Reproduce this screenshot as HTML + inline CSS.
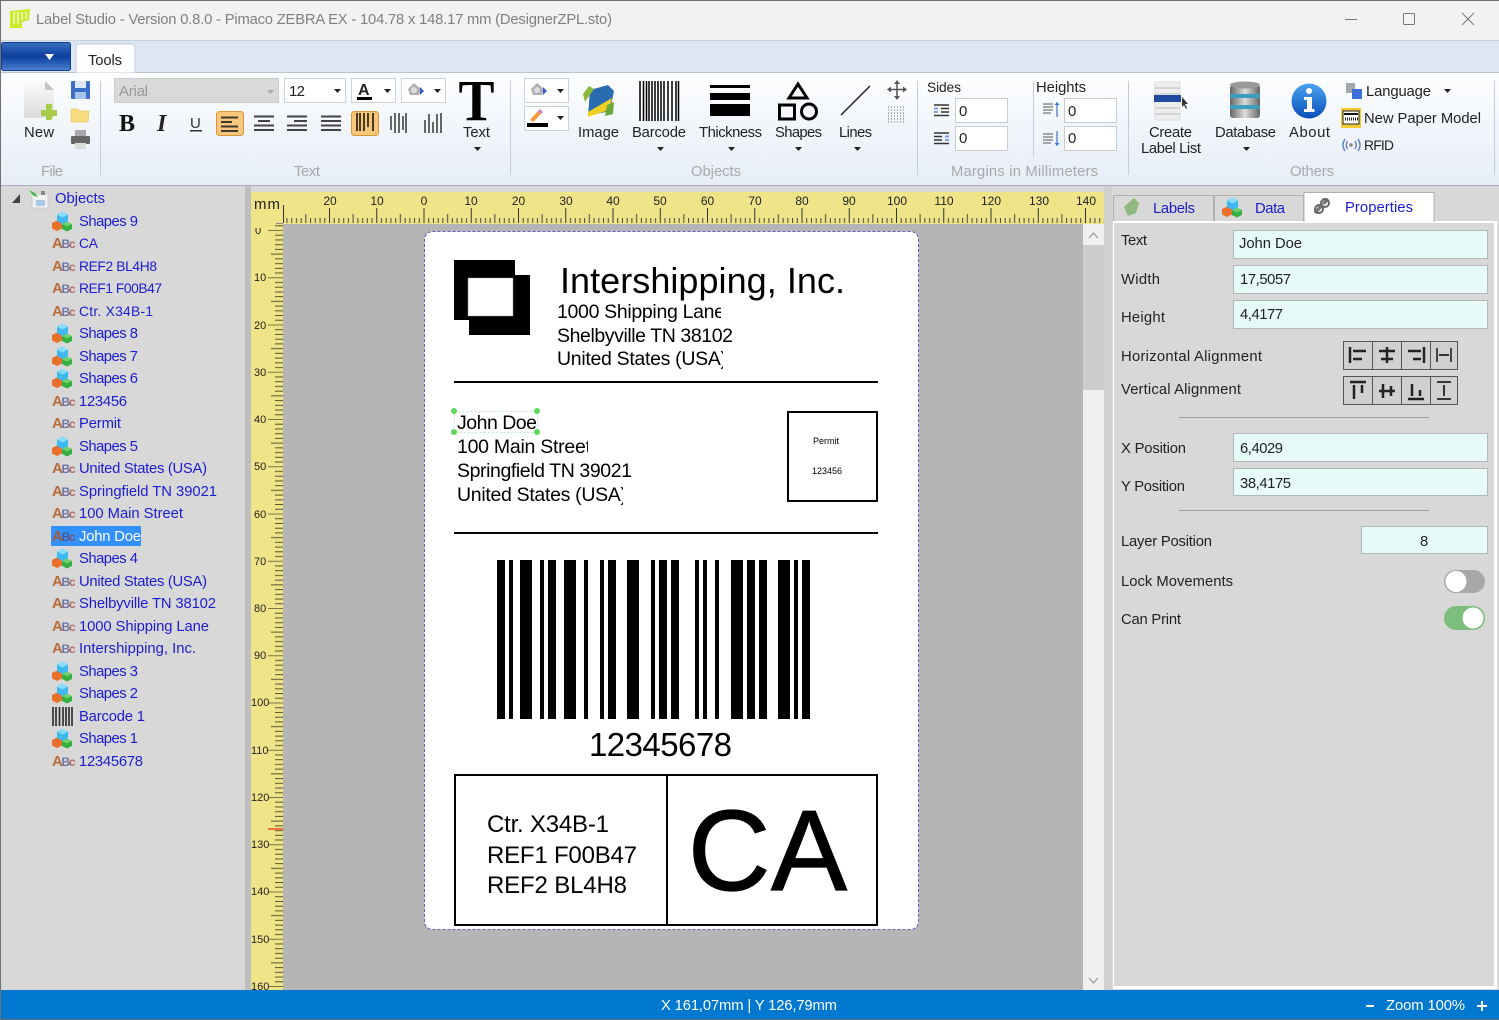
<!DOCTYPE html>
<html><head><meta charset="utf-8"><title>Label Studio</title>
<style>
html,body{margin:0;padding:0;background:#f2f2f2;overflow:hidden}
svg{display:block}
text{font-family:"Liberation Sans",sans-serif;font-size:14.8px;fill:#222;transform:translateY(-.8px)}
.tr text{fill:#1c1cd0}
.g{fill:#a9a9a9}
.L text{transform:none}
.lb{font-size:19.5px;fill:#000}
.rl,.rl text{font-size:12px;fill:#222;transform:none}
text.ic{font-size:15px;font-weight:bold;letter-spacing:-1.3px}
text.s{font-size:13.8px}
</style></head><body>
<svg xmlns="http://www.w3.org/2000/svg" width="1499" height="1020" viewBox="0 0 1499 1020">
<defs>
<linearGradient id="rib" x1="0" y1="0" x2="0" y2="1"><stop offset="0" stop-color="#fdfeff"/><stop offset="1" stop-color="#e6edf6"/></linearGradient>
<linearGradient id="app" x1="0" y1="0" x2="0" y2="1"><stop offset="0" stop-color="#3a6fc0"/><stop offset=".5" stop-color="#0c3f9e"/><stop offset="1" stop-color="#4a82d0"/></linearGradient>
<linearGradient id="doc" x1="0" y1="0" x2="0" y2="1"><stop offset="0" stop-color="#fafafa"/><stop offset="1" stop-color="#dcdcdc"/></linearGradient>
<linearGradient id="db" x1="0" y1="0" x2="1" y2="0"><stop offset="0" stop-color="#666"/><stop offset=".5" stop-color="#ddd"/><stop offset="1" stop-color="#666"/></linearGradient>
<linearGradient id="info" x1="0" y1="0" x2="0" y2="1"><stop offset="0" stop-color="#4aa3f0"/><stop offset="1" stop-color="#0a4fb8"/></linearGradient>
<pattern id="hr" patternUnits="userSpaceOnUse" x="423.5" y="208" width="47.25" height="15">
<rect x="0" y="0" width="1" height="15" fill="#333"/>
<g fill="#444"><rect x="4.7" y="10" width="1" height="5"/><rect x="9.45" y="10" width="1" height="5"/><rect x="14.2" y="10" width="1" height="5"/><rect x="18.9" y="10" width="1" height="5"/><rect x="23.6" y="6" width="1" height="9"/><rect x="28.35" y="10" width="1" height="5"/><rect x="33.1" y="10" width="1" height="5"/><rect x="37.8" y="10" width="1" height="5"/><rect x="42.5" y="10" width="1" height="5"/></g>
</pattern>
<pattern id="vr" patternUnits="userSpaceOnUse" x="268" y="230" width="15" height="47.25">
<rect x="0" y="0" width="15" height="1" fill="#77773f"/>
<g fill="#55552c"><rect x="7" y="4.7" width="8" height="1"/><rect x="7" y="9.45" width="8" height="1"/><rect x="7" y="14.2" width="8" height="1"/><rect x="7" y="18.9" width="8" height="1"/><rect x="3" y="23.6" width="12" height="1"/><rect x="7" y="28.35" width="8" height="1"/><rect x="7" y="33.1" width="8" height="1"/><rect x="7" y="37.8" width="8" height="1"/><rect x="7" y="42.5" width="8" height="1"/></g>
</pattern>
<g id="cubes">
<path d="M0 12l5-2.500 5 2.500v5.500l-5 2.500-5-2.500z" fill="#e8702a"/>
<path d="M10 13l5-2.500 5 2.500v5l-5 2.500-5-2.500z" fill="#36b040"/>
<path d="M10 13l5-2.500 5 2.500-5 2.500z" fill="#72d070"/>
<path d="M5 3.500l5.500-3 5.500 3v6.500l-5.500 3-5.500-3z" fill="#3db8f0"/>
<path d="M5 3.500l5.500-3 5.500 3-5.500 3z" fill="#8adcfb"/>
</g>
<clipPath id="c1"><rect x="550" y="300" width="171" height="25"/></clipPath>
<clipPath id="c2"><rect x="550" y="348" width="173" height="26"/></clipPath>
<clipPath id="c3"><rect x="450" y="436" width="138" height="24"/></clipPath>
<clipPath id="c4"><rect x="450" y="484" width="173" height="26"/></clipPath>
<clipPath id="c5"><rect x="251" y="228" width="32" height="763"/></clipPath>
</defs>

<!-- window -->
<rect width="1499" height="1020" fill="#f2f2f2"/>
<rect y="0" width="1499" height="1" fill="#707070"/>
<path d="M10 11l20-2-1 11-7 2v6l-12 0z" fill="#cbe92f"/>
<path d="M14 12v12M18 12v12M22 12v8M26 12v7" stroke="#f3f9c0" stroke-width="1.500"/>
<text x="36" y="25" textLength="576" style="fill:#808080">Label Studio - Version 0.8.0 - Pimaco ZEBRA EX - 104.78 x 148.17 mm (DesignerZPL.sto)</text>
<g fill="none" stroke="#777" stroke-width="1">
<path d="M1345 19.500h12"/><rect x="1403.500" y="13.500" width="11" height="11" rx="1"/><path d="M1462 13l12 12M1474 13l-12 12"/>
</g>
<rect y="40" width="1499" height="1" fill="#c8d0dc"/>
<rect y="41" width="1499" height="32" fill="#dce6f4"/>
<rect y="72" width="1499" height="1" fill="#b9c4d2"/>
<rect x="1.500" y="42.500" width="69" height="28" rx="2" fill="url(#app)" stroke="#123f90"/>
<path d="M45 54h9l-4.500 6z" fill="#fff"/>
<path d="M76 73V47a3 3 0 0 1 3-3h53a3 3 0 0 1 3 3v26z" fill="#fdfeff" stroke="#c3ccd8"/>
<text x="88" y="66" textLength="34">Tools</text>

<!-- ribbon -->
<rect y="73" width="1499" height="112" fill="url(#rib)"/>
<rect y="185" width="1499" height="1" fill="#a6aeb8"/>
<g fill="#c4ccd6">
<rect x="100" y="81" width="1" height="94"/><rect x="510" y="81" width="1" height="94"/><rect x="917" y="81" width="1" height="94"/><rect x="1033" y="81" width="1" height="76"/><rect x="1128" y="81" width="1" height="94"/><rect x="1494" y="81" width="1" height="94"/>
</g>
<text class="g" x="41" y="177" textLength="22">File</text>
<text class="g" x="294" y="177" textLength="26">Text</text>
<text class="g" x="691" y="177" textLength="50">Objects</text>
<text class="g" x="951" y="177" textLength="147">Margins in Millimeters</text>
<text class="g" x="1290" y="177" textLength="44">Others</text>

<!-- File -->
<path d="M24 81h21l9 9v28H24z" fill="url(#doc)"/><path d="M45 81l9 9h-9z" fill="#c4c4c4"/>
<path d="M46 104h6v6h5v6h-5v4h-6v-4h-5v-6h5z" fill="#a8cc4a"/>
<text x="24" y="138" textLength="30">New</text>
<rect x="71" y="81" width="19" height="18" rx="1" fill="#3d70c8"/><rect x="75" y="81" width="11" height="7" fill="#dce8f8"/><rect x="75" y="92" width="11" height="7" fill="#a8c4ec"/>
<path d="M71 109h7l2 2h9l-1 11H71z" fill="#f7dc80" stroke="#dcb94c" stroke-width=".5"/>
<rect x="75" y="130" width="11" height="6" fill="#aaa"/><rect x="71" y="136" width="19" height="8" rx="1" fill="#666"/><rect x="75" y="143" width="11" height="6" fill="#ddd"/>

<!-- Text group -->
<rect x="114.500" y="78.500" width="164" height="24" fill="#d9d9d9" stroke="#cbcbcb"/>
<text x="119" y="97" textLength="29" style="fill:#999;font-size:15px">Arial</text>
<path d="M267 90h7l-3.500 4z" fill="#aaa"/>
<rect x="284.500" y="78.500" width="61" height="24" fill="#fff" stroke="#ccd2da"/>
<text x="289" y="97" textLength="16" style="font-size:15px">12</text><path d="M334 89h7l-3.500 4z" fill="#222"/>
<rect x="351.500" y="78.500" width="44" height="24" fill="#fff" stroke="#ccd2da"/>
<text x="358" y="96" style="font-size:16px;font-weight:bold">A</text><rect x="357" y="97" width="15" height="3" fill="#000"/><path d="M384 89h7l-3.500 4z" fill="#222"/>
<rect x="401.500" y="78.500" width="44" height="24" fill="#fff" stroke="#ccd2da"/>
<path d="M408 89l6-6 7 6-2 6h-9z" fill="#b0b0b0"/><circle cx="414" cy="90" r="3" fill="#ddd"/><path d="M420 87l4 4-4 4z" fill="#3a5ad0"/><path d="M434 89h7l-3.500 4z" fill="#222"/>

<text x="119" y="132" style="font-family:'Liberation Serif',serif;font-size:24px;font-weight:bold;fill:#111">B</text>
<text x="157" y="132" style="font-family:'Liberation Serif',serif;font-size:24px;font-weight:bold;font-style:italic;fill:#222">I</text>
<text x="190" y="129" style="font-size:15px;fill:#333">U</text><rect x="190" y="130" width="12" height="1.500" fill="#333"/>
<rect x="216.500" y="111.500" width="27" height="24" rx="3" fill="#f9c77c" stroke="#d9963a"/>
<path d="M221 117.500h17M221 122h11M221 126.500h17M221 131h17" stroke="#3f3a30" stroke-width="2"/>
<path d="M254 116.500h20M258 121h12M254 125.500h20M254 130h20" stroke="#444" stroke-width="2"/>
<path d="M287 116.500h20M294 121h13M287 125.500h20M287 130h20" stroke="#444" stroke-width="2"/>
<path d="M321 116.500h20M321 121h20M321 125.500h20M321 130h20" stroke="#444" stroke-width="2"/>
<rect x="351.500" y="111.500" width="27" height="24" rx="3" fill="#f9c77c" stroke="#d9963a"/>
<path d="M357 113v18M360 113v18M364 113v18M368 113v14M373 113v18" stroke="#4a3a20" stroke-width="2"/>
<path d="M391 116v14M395 113v20M399 113v20M403 116v14M406 113v20" stroke="#555" stroke-width="1.800"/>
<path d="M425 120v13M429 114v19M433 122v11M437 114v19M441 113v20" stroke="#555" stroke-width="1.800"/>
<g class="L"><text x="458.500" y="120" textLength="36" lengthAdjust="spacingAndGlyphs" style="font-family:'Liberation Serif',serif;font-size:58px;font-weight:bold;fill:#000">T</text></g>
<text x="463" y="138" textLength="27">Text</text><path d="M474 147h7l-3.500 4z" fill="#222"/>

<!-- Objects -->
<rect x="524.500" y="78.500" width="44" height="24" fill="#fff" stroke="#ccd2da"/>
<path d="M531 89l6-6 7 6-2 6h-9z" fill="#b0b0b0"/><circle cx="537" cy="90" r="3" fill="#ddd"/><path d="M543 87l4 4-4 4z" fill="#3a5ad0"/><path d="M557 89h7l-3.500 4z" fill="#222"/>
<rect x="524.500" y="106.500" width="44" height="24" fill="#fff" stroke="#ccd2da"/>
<path d="M530 120l8-9 3 3-8 8z" fill="#f09a3c"/><path d="M538 111l2-2 3 3-2 2z" fill="#c080d0"/><rect x="527" y="123" width="21" height="4" fill="#000"/><path d="M557 116h7l-3.500 4z" fill="#222"/>
<path d="M584 88l30-5 1 30-28 6z" fill="#fdfdfd"/>
<path d="M590 90l18-5 6 6-4 20-22 5z" fill="#2a6cb0"/><path d="M588 112l24-14-3 12-21 7z" fill="#f0d020"/><path d="M583 94l6-8 5 3-9 13z" fill="#8ab83c"/><path d="M607 105l7-3-1 12-8 2z" fill="#6aa83c"/>
<text x="578" y="138" textLength="41">Image</text>
<path d="M640 81v40M643.500 81v40M646.500 81v40M649 81v40M652 81v40M655 81v40M658 81v40M661 81v40M664 81v40M668 81v40M672 81v40M676 81v40M678.500 81v40" stroke="#000" stroke-width="1.500"/>
<text x="632" y="138" textLength="54">Barcode</text><path d="M657 147h7l-3.500 4z" fill="#222"/>
<rect x="710" y="85" width="40" height="3" fill="#000"/><rect x="710" y="93" width="40" height="7" fill="#000"/><rect x="710" y="104" width="40" height="12" fill="#000"/>
<text x="699" y="138" textLength="63">Thickness</text><path d="M728 147h7l-3.500 4z" fill="#222"/>
<path d="M798 84l9 14h-18z" fill="none" stroke="#000" stroke-width="3"/><rect x="779.500" y="105" width="15" height="14" fill="none" stroke="#000" stroke-width="3"/><circle cx="809" cy="111.500" r="7.500" fill="none" stroke="#000" stroke-width="3"/>
<text x="775" y="138" textLength="47">Shapes</text><path d="M795 147h7l-3.500 4z" fill="#222"/>
<path d="M841 115l29-29" stroke="#222" stroke-width="1.500"/>
<text x="839" y="138" textLength="33">Lines</text><path d="M854 147h7l-3.500 4z" fill="#222"/>
<path d="M897 81v18M888 89.500h18" stroke="#555" stroke-width="1.500"/><path d="M897 80l-3 4h6zM897 100l-3-4h6zM887 89.500l4-3v6zM907 89.500l-4-3v6z" fill="#555"/>
<path d="M888 107h16M888 110h16M888 113h16M888 116h16M888 119h16M888 122h16" stroke="#666" stroke-width="1" stroke-dasharray="1 2"/>

<!-- Margins -->
<text class="s" x="927" y="93" textLength="34">Sides</text>
<text x="1036" y="93" textLength="50">Heights</text>
<g fill="#fff" stroke="#c6ccd4">
<rect x="955.500" y="98.500" width="52" height="24"/><rect x="955.500" y="126.500" width="52" height="24"/><rect x="1064.500" y="98.500" width="52" height="24"/><rect x="1064.500" y="126.500" width="52" height="24"/>
</g>
<text x="959" y="117" style="font-size:15px">0</text><text x="959" y="144" style="font-size:15px">0</text><text x="1068" y="117" style="font-size:15px">0</text><text x="1068" y="144" style="font-size:15px">0</text>
<path d="M934 105h15M941 108.500h8M941 112h8M934 115.500h15" stroke="#333" stroke-width="1.500"/><path d="M934 108.500h4M934 112h4" stroke="#7aa0e8" stroke-width="2"/>
<path d="M934 133h15M934 136.500h8M934 140h8M934 143.500h15" stroke="#333" stroke-width="1.500"/><path d="M945 136.500h4M945 140h4" stroke="#7aa0e8" stroke-width="2"/>
<path d="M1043 104h10M1043 107h10M1043 110h10M1043 113h8" stroke="#555" stroke-width="1"/><path d="M1057 104v13" stroke="#3a70c8" stroke-width="1.200"/><path d="M1057 102l-2.500 3h5z" fill="#3a70c8"/>
<path d="M1043 134h10M1043 137h10M1043 140h10M1043 143h8" stroke="#555" stroke-width="1"/><path d="M1057 131v13" stroke="#3a70c8" stroke-width="1.200"/><path d="M1057 146l-2.500-3h5z" fill="#3a70c8"/>

<!-- Others -->
<rect x="1155" y="82" width="25" height="38" fill="#eee" stroke="#ddd"/>
<path d="M1155 88h25M1155 94h25M1155 108h25M1155 114h25" stroke="#bbb"/>
<rect x="1154" y="95" width="27" height="7" fill="#1f4aa0"/>
<path d="M1182 97l0 10 2-2 2 4 1-1-2-4 3 0z" fill="#333"/>
<text x="1149" y="138" textLength="43">Create</text><text x="1141" y="154" textLength="60">Label List</text>
<rect x="1230" y="85" width="30" height="33" rx="3" fill="url(#db)"/><ellipse cx="1245" cy="85" rx="15" ry="3.500" fill="#999"/>
<rect x="1230" y="94" width="30" height="4" fill="#38a0b8"/><rect x="1230" y="105" width="30" height="4" fill="#38a0b8"/>
<text x="1215" y="138" textLength="61">Database</text><path d="M1243 147h7l-3.500 4z" fill="#222"/>
<circle cx="1309" cy="101" r="17.500" fill="url(#info)"/>
<circle cx="1309" cy="91" r="3" fill="#fff"/><path d="M1304 97h8v12h2.500v3h-10.500v-3h3v-9h-3z" fill="#fff"/>
<text x="1289" y="138" textLength="41">About</text>
<rect x="1346" y="83" width="9" height="10" fill="#a0a8b0"/><rect x="1352" y="89" width="10" height="10" fill="#3a70d8"/>
<text x="1366" y="97" textLength="65">Language</text><path d="M1444 89h7l-3.500 4z" fill="#222"/>
<rect x="1341" y="108" width="20" height="20" fill="#f4cc30"/><rect x="1343" y="111" width="16" height="13" fill="#fff" stroke="#222" stroke-width="1"/><path d="M1344 114h14" stroke="#111" stroke-width="2"/><path d="M1345 119h13" stroke="#222" stroke-width="3" stroke-dasharray="1 1"/>
<text x="1364" y="124" textLength="117">New Paper Model</text>
<path d="M1345 139q-4 6 0 12M1358 139q4 6 0 12M1347.500 141q-2.500 4 0 8M1355 141q2.500 4 0 8" fill="none" stroke="#5a7ac8" stroke-width="1.300"/><circle cx="1351" cy="145" r="1.800" fill="#888"/>
<text class="s" x="1364" y="151" textLength="30">RFID</text>

<!-- panels backgrounds -->
<rect x="0" y="186" width="1499" height="804" fill="#d8d8d8"/>
<rect x="245" y="186" width="6" height="804" fill="#bfbfbf"/>
<rect x="1104" y="186" width="8" height="804" fill="#d0d0d0"/>

<!-- Tree -->
<path d="M12 203l8-9v9z" fill="#444"/>
<rect x="32" y="194" width="16" height="14" fill="#f0f0f0" stroke="#c8c8c8" stroke-width=".8"/><rect x="36" y="200" width="9" height="6" fill="#a8c8e8"/><path d="M29 190l6 3 3 4-4-1-3-3z" fill="#4ab84a"/><rect x="41" y="191" width="4" height="4" fill="#888"/>
<rect x="51" y="526" width="90" height="20" fill="#3390ff"/>
<g class="tr">
<text x="55" y="204" textLength="50">Objects</text>
<use href="#cubes" x="52" y="211"/><text x="79" y="227" textLength="59">Shapes 9</text>
<text class="ic" x="52" y="249"><tspan fill="#b86c3a">A</tspan><tspan fill="#6e78a8" font-size="12">B</tspan><tspan fill="#b06a60" font-size="12">c</tspan></text><text class="s" x="79" y="249" textLength="19">CA</text>
<text class="ic" x="52" y="272"><tspan fill="#b86c3a">A</tspan><tspan fill="#6e78a8" font-size="12">B</tspan><tspan fill="#b06a60" font-size="12">c</tspan></text><text class="s" x="79" y="272" textLength="78">REF2 BL4H8</text>
<text class="ic" x="52" y="294"><tspan fill="#b86c3a">A</tspan><tspan fill="#6e78a8" font-size="12">B</tspan><tspan fill="#b06a60" font-size="12">c</tspan></text><text class="s" x="79" y="294" textLength="83">REF1 F00B47</text>
<text class="ic" x="52" y="317"><tspan fill="#b86c3a">A</tspan><tspan fill="#6e78a8" font-size="12">B</tspan><tspan fill="#b06a60" font-size="12">c</tspan></text><text class="s" x="79" y="317" textLength="74">Ctr. X34B-1</text>
<use href="#cubes" x="52" y="323"/><text x="79" y="339" textLength="59">Shapes 8</text>
<use href="#cubes" x="52" y="346"/><text x="79" y="362" textLength="59">Shapes 7</text>
<use href="#cubes" x="52" y="368"/><text x="79" y="384" textLength="59">Shapes 6</text>
<text class="ic" x="52" y="407"><tspan fill="#b86c3a">A</tspan><tspan fill="#6e78a8" font-size="12">B</tspan><tspan fill="#b06a60" font-size="12">c</tspan></text><text x="79" y="407" textLength="48">123456</text>
<text class="ic" x="52" y="429"><tspan fill="#b86c3a">A</tspan><tspan fill="#6e78a8" font-size="12">B</tspan><tspan fill="#b06a60" font-size="12">c</tspan></text><text x="79" y="429" textLength="42">Permit</text>
<use href="#cubes" x="52" y="436"/><text x="79" y="452" textLength="59">Shapes 5</text>
<text class="ic" x="52" y="474"><tspan fill="#b86c3a">A</tspan><tspan fill="#6e78a8" font-size="12">B</tspan><tspan fill="#b06a60" font-size="12">c</tspan></text><text x="79" y="474" textLength="128">United States (USA)</text>
<text class="ic" x="52" y="497"><tspan fill="#b86c3a">A</tspan><tspan fill="#6e78a8" font-size="12">B</tspan><tspan fill="#b06a60" font-size="12">c</tspan></text><text x="79" y="497" textLength="138">Springfield TN 39021</text>
<text class="ic" x="52" y="519"><tspan fill="#b86c3a">A</tspan><tspan fill="#6e78a8" font-size="12">B</tspan><tspan fill="#b06a60" font-size="12">c</tspan></text><text x="79" y="519" textLength="104">100 Main Street</text>
<text class="ic" x="52" y="542"><tspan fill="#a8583a">A</tspan><tspan fill="#4a5a90" font-size="12">B</tspan><tspan fill="#805060" font-size="12">c</tspan></text><text x="79" y="542" textLength="62" style="fill:#fff">John Doe</text>
<use href="#cubes" x="52" y="548"/><text x="79" y="564" textLength="59">Shapes 4</text>
<text class="ic" x="52" y="587"><tspan fill="#b86c3a">A</tspan><tspan fill="#6e78a8" font-size="12">B</tspan><tspan fill="#b06a60" font-size="12">c</tspan></text><text x="79" y="587" textLength="128">United States (USA)</text>
<text class="ic" x="52" y="609"><tspan fill="#b86c3a">A</tspan><tspan fill="#6e78a8" font-size="12">B</tspan><tspan fill="#b06a60" font-size="12">c</tspan></text><text x="79" y="609" textLength="137">Shelbyville TN 38102</text>
<text class="ic" x="52" y="632"><tspan fill="#b86c3a">A</tspan><tspan fill="#6e78a8" font-size="12">B</tspan><tspan fill="#b06a60" font-size="12">c</tspan></text><text x="79" y="632" textLength="130">1000 Shipping Lane</text>
<text class="ic" x="52" y="654"><tspan fill="#b86c3a">A</tspan><tspan fill="#6e78a8" font-size="12">B</tspan><tspan fill="#b06a60" font-size="12">c</tspan></text><text x="79" y="654" textLength="117">Intershipping, Inc.</text>
<use href="#cubes" x="52" y="661"/><text x="79" y="677" textLength="59">Shapes 3</text>
<use href="#cubes" x="52" y="683"/><text x="79" y="699" textLength="59">Shapes 2</text>
<path d="M53 707v19M56 707v19M59.500 707v19M63 707v19M66 707v19M69 707v19M72 707v19" stroke="#333" stroke-width="1.700"/><text x="79" y="722" textLength="66">Barcode 1</text>
<use href="#cubes" x="52" y="728"/><text x="79" y="744" textLength="59">Shapes 1</text>
<text class="ic" x="52" y="767"><tspan fill="#b86c3a">A</tspan><tspan fill="#6e78a8" font-size="12">B</tspan><tspan fill="#b06a60" font-size="12">c</tspan></text><text x="79" y="767" textLength="64">12345678</text>
</g>

<!-- Rulers & canvas -->
<rect x="251" y="192" width="853" height="32" fill="#f0e488"/>
<rect x="251" y="224" width="32" height="766" fill="#f0e488"/>
<rect x="283" y="224" width="800" height="766" fill="#b5b5b5"/>
<rect x="283" y="208" width="821" height="15" fill="url(#hr)"/>
<rect x="283" y="205" width="1" height="18" fill="#333"/>
<rect x="276" y="223" width="7" height="1" fill="#888"/>
<rect x="268" y="225" width="15" height="765" fill="url(#vr)"/>
<rect x="268" y="828" width="15" height="2" fill="#f0703c"/>
<text x="254" y="210" style="font-size:15px" textLength="26">mm</text>
<g class="rl" text-anchor="middle">
<text x="330" y="205">20</text><text x="377" y="205">10</text><text x="424" y="205">0</text><text x="471" y="205">10</text><text x="518.500" y="205">20</text><text x="566" y="205">30</text><text x="613" y="205">40</text><text x="660" y="205">50</text><text x="707.500" y="205">60</text><text x="755" y="205">70</text><text x="802" y="205">80</text><text x="849" y="205">90</text><text x="897" y="205">100</text><text x="944" y="205">110</text><text x="991" y="205">120</text><text x="1039" y="205">130</text><text x="1086" y="205">140</text>
</g>
<g clip-path="url(#c5)">
<g class="rl">
<text x="255" y="234" style="font-size:11px">0</text><text x="254" y="281" style="font-size:11px">10</text><text x="254" y="329" style="font-size:11px">20</text><text x="254" y="376" style="font-size:11px">30</text><text x="254" y="423" style="font-size:11px">40</text><text x="254" y="470" style="font-size:11px">50</text><text x="254" y="518" style="font-size:11px">60</text><text x="254" y="565" style="font-size:11px">70</text><text x="254" y="612" style="font-size:11px">80</text><text x="254" y="659" style="font-size:11px">90</text><text x="251" y="706" style="font-size:11px">100</text><text x="251" y="754" style="font-size:11px">110</text><text x="251" y="801" style="font-size:11px">120</text><text x="251" y="848" style="font-size:11px">130</text><text x="251" y="895" style="font-size:11px">140</text><text x="251" y="943" style="font-size:11px">150</text><text x="251" y="990" style="font-size:11px">160</text>
</g>
</g>
<!-- scrollbar -->
<rect x="1083" y="224" width="21" height="766" fill="#f0f0f0"/>
<rect x="1083" y="245" width="21" height="145" fill="#cdcdcd"/>
<path d="M1089 238l4.500-5 4.500 5M1089 978l4.500 5 4.500-5" fill="none" stroke="#a0a0a0" stroke-width="1.300"/>

<!-- label -->
<g class="L">
<rect x="424.500" y="231.500" width="494" height="698" rx="8" fill="#fff" stroke="#5e5ec4" stroke-dasharray="3 2"/>
<rect x="454" y="260" width="61" height="60" fill="#000"/><rect x="469" y="275" width="61" height="60" fill="#000"/><rect x="468" y="278" width="45" height="38" fill="#fff" stroke="#999" stroke-width=".5"/>
<text x="560" y="293" textLength="285" style="font-size:36px;fill:#000">Intershipping, Inc.</text>
<g clip-path="url(#c1)"><text class="lb" x="557" y="318" textLength="168">1000 Shipping Lane</text></g>
<text class="lb" x="557" y="342" textLength="176">Shelbyville TN 38102</text>
<g clip-path="url(#c2)"><text class="lb" x="557" y="365" textLength="170">United States (USA)</text></g>
<rect x="454" y="381" width="424" height="2" fill="#000"/>
<rect x="454.500" y="411.500" width="83" height="21" fill="none" stroke="#a4e8a4" stroke-dasharray="2 2" stroke-width=".8"/>
<text class="lb" x="457" y="429" textLength="80">John Doe</text>
<g fill="#5cd85c"><circle cx="454" cy="411" r="3"/><circle cx="537" cy="411" r="3"/><circle cx="454" cy="432" r="3"/><circle cx="537" cy="432" r="3"/></g>
<g clip-path="url(#c3)"><text class="lb" x="457" y="453" textLength="134">100 Main Street</text></g>
<text class="lb" x="457" y="477" textLength="175">Springfield TN 39021</text>
<g clip-path="url(#c4)"><text class="lb" x="457" y="501" textLength="170">United States (USA)</text></g>
<rect x="788" y="412" width="89" height="89" fill="none" stroke="#000" stroke-width="2"/>
<text x="826" y="444" text-anchor="middle" style="font-size:9px;fill:#000">Permit</text>
<text x="827" y="474" text-anchor="middle" style="font-size:9px;fill:#000">123456</text>
<rect x="454" y="532" width="424" height="2" fill="#000"/>
<path fill="#000" d="M497 560h8v159h-8zM509 560h4v159h-4zM520 560h12v159h-12zM540 560h4v159h-4zM548 560h8v159h-8zM564 560h12v159h-12zM584 560h4v159h-4zM600 560h4v159h-4zM608 560h8v159h-8zM627 560h12v159h-12zM651 560h4v159h-4zM659 560h8v159h-8zM671 560h8v159h-8zM695 560h4v159h-4zM703 560h4v159h-4zM715 560h4v159h-4zM731 560h12v159h-12zM747 560h8v159h-8zM759 560h8v159h-8zM778 560h12v159h-12zM794 560h4v159h-4zM802 560h8v159h-8z"/>
<text x="589" y="756" textLength="143" style="font-size:33px;fill:#000">12345678</text>
<rect x="455" y="775" width="422" height="150" fill="none" stroke="#000" stroke-width="2"/>
<rect x="666" y="775" width="2" height="150" fill="#000"/>
<text x="487" y="832" textLength="122" style="font-size:24px;fill:#000">Ctr. X34B-1</text>
<text x="487" y="863" textLength="150" style="font-size:24px;fill:#000">REF1 F00B47</text>
<text x="487" y="893" textLength="140" style="font-size:24px;fill:#000">REF2 BL4H8</text>
<text x="688" y="890" textLength="159" style="font-size:114px;fill:#000;stroke:#000;stroke-width:1.200px">CA</text>
</g>

<!-- right panel -->
<rect x="1113.500" y="195.500" width="100" height="26" fill="#d8d8d8" stroke="#b0b0b0"/>
<rect x="1214.500" y="195.500" width="89" height="26" fill="#d8d8d8" stroke="#b0b0b0"/>
<rect x="1113" y="221" width="384" height="768" fill="#fff"/>
<rect x="1114" y="223" width="380" height="763" fill="#d8d8d8"/>
<rect x="1304" y="192.500" width="130" height="30" fill="#fff"/>
<path d="M1304 222v-29.500h130V222" fill="none" stroke="#b0b0b0"/>
<path d="M1124 207l10-9 5 5-3 10-8 3z" fill="#90b880"/>
<use href="#cubes" x="1222" y="197"/>
<path d="M1315 213l6-7M1323 204l5-5" stroke="#777" stroke-width="3.500" fill="none"/><circle cx="1319" cy="209" r="4" fill="none" stroke="#666" stroke-width="2"/><circle cx="1325" cy="203" r="4" fill="none" stroke="#666" stroke-width="2"/>
<g class="L">
<text x="1153" y="213" textLength="42" style="fill:#1c1cd0">Labels</text>
<text x="1255" y="213" textLength="30" style="fill:#1c1cd0">Data</text>
<text x="1345" y="212" textLength="68" style="fill:#1c1cd0">Properties</text>
<text x="1121" y="245" textLength="26">Text</text>
<text x="1121" y="284" textLength="39">Width</text>
<text x="1121" y="322" textLength="44">Height</text>
<text x="1121" y="361" textLength="141">Horizontal Alignment</text>
<text x="1121" y="394" textLength="120">Vertical Alignment</text>
<text x="1121" y="453" textLength="65">X Position</text>
<text x="1121" y="491" textLength="64">Y Position</text>
<text x="1121" y="546" textLength="91">Layer Position</text>
<text x="1121" y="586" textLength="112">Lock Movements</text>
<text x="1121" y="624" textLength="60">Can Print</text>
</g>
<g fill="#e6fbf8" stroke="#b4b8b8">
<rect x="1233.500" y="230.500" width="254" height="28"/><rect x="1233.500" y="265.500" width="254" height="28"/><rect x="1233.500" y="300.500" width="254" height="28"/><rect x="1233.500" y="433.500" width="254" height="28"/><rect x="1233.500" y="468.500" width="254" height="27"/><rect x="1361.500" y="526.500" width="126" height="27"/>
</g>
<text x="1239" y="249" textLength="63">John Doe</text>
<g class="L">
<text x="1240" y="284" textLength="51">17,5057</text>
<text x="1240" y="319" textLength="43">4,4177</text>
<text x="1240" y="453" textLength="43">6,4029</text>
<text x="1240" y="488" textLength="51">38,4175</text>
<text x="1420" y="546">8</text>
</g>
<g fill="#d0d0d0" stroke="#555">
<rect x="1343.500" y="341.500" width="29" height="28"/><rect x="1372.500" y="341.500" width="29" height="28"/><rect x="1401.500" y="341.500" width="29" height="28"/><rect x="1430.500" y="341.500" width="27" height="28"/>
<rect x="1343.500" y="376.500" width="29" height="28"/><rect x="1372.500" y="376.500" width="29" height="28"/><rect x="1401.500" y="376.500" width="29" height="28"/><rect x="1430.500" y="376.500" width="27" height="28"/>
</g>
<g stroke="#222" stroke-width="2.500" fill="none">
<path d="M1350 347v16M1353 351h13M1353 359h9"/>
<path d="M1387 347v16M1379 351h16M1381 359h12"/>
<path d="M1424 347v16M1408 351h13M1413 359h8"/>
<path d="M1437 348v14M1451 348v14" stroke-width="1.600"/><path d="M1439 355h10" stroke-width="1.800"/>
<path d="M1350 382h16M1354 385v14M1362 385v8"/>
<path d="M1379 391h16M1383 384v14M1391 386v10"/>
<path d="M1408 399h16M1412 384v12M1420 390v6"/>
<path d="M1437 382h14M1437 399h14" stroke-width="1.800"/><path d="M1444 385v11" stroke-width="1.800"/>
</g>
<rect x="1179" y="417" width="250" height="1" fill="#a0a0a0"/>
<rect x="1179" y="510" width="250" height="1" fill="#a0a0a0"/>
<rect x="1444" y="570" width="41" height="23" rx="11.500" fill="#a8a8a8"/><circle cx="1456" cy="581.500" r="10.500" fill="#fff"/>
<rect x="1444" y="606" width="41" height="24" rx="12" fill="#7cbf7c"/><circle cx="1473" cy="618" r="10.500" fill="#fff"/>

<!-- status bar -->
<rect x="0" y="990" width="1499" height="29" fill="#0078d0"/>
<rect x="0" y="1019" width="1499" height="1" fill="#5a7080"/>
<rect x="0" y="0" width="1" height="1020" fill="#707070"/>
<text x="661" y="1011" textLength="176" style="fill:#fff">X 161,07mm | Y 126,79mm</text>
<rect x="1366" y="1005" width="8" height="2" fill="#fff"/>
<text x="1386" y="1011" textLength="79" style="fill:#fff">Zoom 100%</text>
<path d="M1477 1006h10M1482 1001v10" stroke="#fff" stroke-width="2"/>
</svg>
</body></html>
